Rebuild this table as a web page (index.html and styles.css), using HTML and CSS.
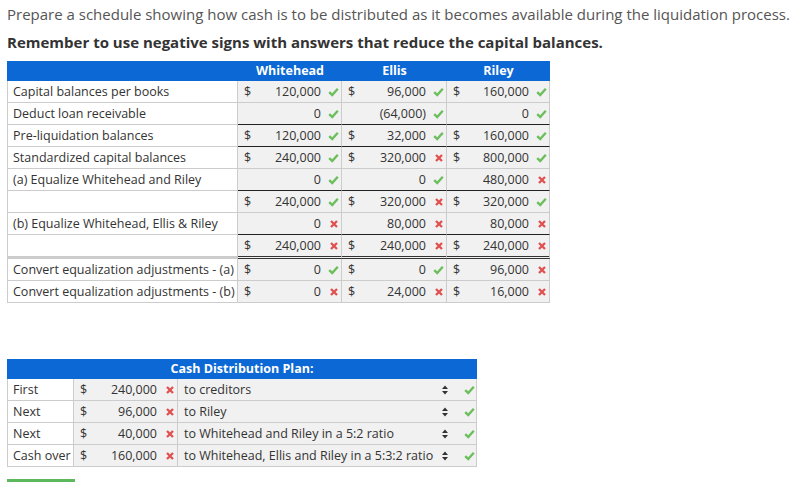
FILE: index.html
```html
<!DOCTYPE html>
<html>
<head>
<meta charset="utf-8">
<link rel="stylesheet" href="styles.css">
</head>
<body>
<p class="intro">Prepare a schedule showing how cash is to be distributed as it becomes available during the liquidation process.</p>
<p class="note">Remember to use negative signs with answers that reduce the capital balances.</p>

<table class="sched">
  <colgroup><col class="c-label"><col class="c-wh"><col class="c-el"><col class="c-ri"></colgroup>
  <thead>
    <tr><th></th><th>Whitehead</th><th>Ellis</th><th>Riley</th></tr>
  </thead>
  <tbody>
    <tr>
      <td class="lbl">Capital balances per books</td>
      <td class="d"><div class="v"><span class="cur">$</span><span class="amt">120,000</span><span class="ic ok"></span></div></td>
      <td class="d"><div class="v"><span class="cur">$</span><span class="amt">96,000</span><span class="ic ok"></span></div></td>
      <td class="d"><div class="v"><span class="cur">$</span><span class="amt">160,000</span><span class="ic ok"></span></div></td>
    </tr>
    <tr class="under">
      <td class="lbl">Deduct loan receivable</td>
      <td class="d"><div class="v"><span class="cur"></span><span class="amt">0</span><span class="ic ok"></span></div></td>
      <td class="d"><div class="v"><span class="cur"></span><span class="amt">(64,000)</span><span class="ic ok"></span></div></td>
      <td class="d"><div class="v"><span class="cur"></span><span class="amt">0</span><span class="ic ok"></span></div></td>
    </tr>
    <tr class="under">
      <td class="lbl">Pre-liquidation balances</td>
      <td class="d"><div class="v"><span class="cur">$</span><span class="amt">120,000</span><span class="ic ok"></span></div></td>
      <td class="d"><div class="v"><span class="cur">$</span><span class="amt">32,000</span><span class="ic ok"></span></div></td>
      <td class="d"><div class="v"><span class="cur">$</span><span class="amt">160,000</span><span class="ic ok"></span></div></td>
    </tr>
    <tr>
      <td class="lbl">Standardized capital balances</td>
      <td class="d"><div class="v"><span class="cur">$</span><span class="amt">240,000</span><span class="ic ok"></span></div></td>
      <td class="d"><div class="v"><span class="cur">$</span><span class="amt">320,000</span><span class="ic bad"></span></div></td>
      <td class="d"><div class="v"><span class="cur">$</span><span class="amt">800,000</span><span class="ic ok"></span></div></td>
    </tr>
    <tr class="under">
      <td class="lbl">(a) Equalize Whitehead and Riley</td>
      <td class="d"><div class="v"><span class="cur"></span><span class="amt">0</span><span class="ic ok"></span></div></td>
      <td class="d"><div class="v"><span class="cur"></span><span class="amt">0</span><span class="ic ok"></span></div></td>
      <td class="d"><div class="v"><span class="cur"></span><span class="amt">480,000</span><span class="ic bad"></span></div></td>
    </tr>
    <tr>
      <td class="lbl"></td>
      <td class="d"><div class="v"><span class="cur">$</span><span class="amt">240,000</span><span class="ic ok"></span></div></td>
      <td class="d"><div class="v"><span class="cur">$</span><span class="amt">320,000</span><span class="ic bad"></span></div></td>
      <td class="d"><div class="v"><span class="cur">$</span><span class="amt">320,000</span><span class="ic ok"></span></div></td>
    </tr>
    <tr class="under">
      <td class="lbl">(b) Equalize Whitehead, Ellis &amp; Riley</td>
      <td class="d"><div class="v"><span class="cur"></span><span class="amt">0</span><span class="ic bad"></span></div></td>
      <td class="d"><div class="v"><span class="cur"></span><span class="amt">80,000</span><span class="ic bad"></span></div></td>
      <td class="d"><div class="v"><span class="cur"></span><span class="amt">80,000</span><span class="ic bad"></span></div></td>
    </tr>
    <tr class="dbl">
      <td class="lbl"></td>
      <td class="d"><div class="v"><span class="cur">$</span><span class="amt">240,000</span><span class="ic bad"></span></div></td>
      <td class="d"><div class="v"><span class="cur">$</span><span class="amt">240,000</span><span class="ic bad"></span></div></td>
      <td class="d"><div class="v"><span class="cur">$</span><span class="amt">240,000</span><span class="ic bad"></span></div></td>
    </tr>
    <tr>
      <td class="lbl">Convert equalization adjustments - (a)</td>
      <td class="d"><div class="v"><span class="cur">$</span><span class="amt">0</span><span class="ic ok"></span></div></td>
      <td class="d"><div class="v"><span class="cur">$</span><span class="amt">0</span><span class="ic ok"></span></div></td>
      <td class="d"><div class="v"><span class="cur">$</span><span class="amt">96,000</span><span class="ic bad"></span></div></td>
    </tr>
    <tr>
      <td class="lbl">Convert equalization adjustments - (b)</td>
      <td class="d"><div class="v"><span class="cur">$</span><span class="amt">0</span><span class="ic bad"></span></div></td>
      <td class="d"><div class="v"><span class="cur">$</span><span class="amt">24,000</span><span class="ic bad"></span></div></td>
      <td class="d"><div class="v"><span class="cur">$</span><span class="amt">16,000</span><span class="ic bad"></span></div></td>
    </tr>
  </tbody>
</table>

<table class="plan">
  <colgroup><col class="p-label"><col class="p-amt"><col class="p-desc"></colgroup>
  <thead>
    <tr><th colspan="3">Cash Distribution Plan:</th></tr>
  </thead>
  <tbody>
    <tr>
      <td class="lbl">First</td>
      <td class="d"><div class="v"><span class="cur">$</span><span class="amt">240,000</span><span class="ic bad"></span></div></td>
      <td class="d"><div class="sel"><span class="txt">to creditors</span><span class="arrows"></span><span class="ic ok"></span></div></td>
    </tr>
    <tr>
      <td class="lbl">Next</td>
      <td class="d"><div class="v"><span class="cur">$</span><span class="amt">96,000</span><span class="ic bad"></span></div></td>
      <td class="d"><div class="sel"><span class="txt">to Riley</span><span class="arrows"></span><span class="ic ok"></span></div></td>
    </tr>
    <tr>
      <td class="lbl">Next</td>
      <td class="d"><div class="v"><span class="cur">$</span><span class="amt">40,000</span><span class="ic bad"></span></div></td>
      <td class="d"><div class="sel"><span class="txt">to Whitehead and Riley in a 5:2 ratio</span><span class="arrows"></span><span class="ic ok"></span></div></td>
    </tr>
    <tr>
      <td class="lbl">Cash over</td>
      <td class="d"><div class="v"><span class="cur">$</span><span class="amt">160,000</span><span class="ic bad"></span></div></td>
      <td class="d"><div class="sel"><span class="txt">to Whitehead, Ellis and Riley in a 5:3:2 ratio</span><span class="arrows"></span><span class="ic ok"></span></div></td>
    </tr>
  </tbody>
</table>

<div class="bar"></div>
</body>
</html>
```

FILE: styles.css
```css
html, body {
  margin: 0;
  padding: 0;
  background: #fff;
}
body {
  padding: 4px 7px 0 7px;
  font-family: "Open Sans", "Noto Sans", sans-serif;
  color: #333;
}
.intro {
  margin: 0;
  font-size: 15px;
  line-height: 20px;
  color: #555;
}
.note {
  margin: 8px 0 0 0;
  font-size: 15px;
  line-height: 20px;
  font-weight: bold;
  color: #333;
}

table {
  border-collapse: separate;
  border-spacing: 0;
  table-layout: fixed;
  font-size: 12.5px;
  color: #333;
}
th {
  background: #0b68d4;
  color: #fff;
  font-weight: bold;
  height: 20px;
  padding: 0;
  text-align: center;
  line-height: 20px;
}
td {
  height: 21px;
  padding: 0;
  border-right: 1px solid #ccc;
  border-bottom: 1px solid #ccc;
  line-height: 21px;
  white-space: nowrap;
  overflow: hidden;
}
td:first-child {
  border-left: 1px solid #ccc;
}
td.lbl {
  background: #fff;
  padding-left: 5px;
}
td.d {
  background: #f1f1f1;
}

.sched {
  margin-top: 9px;
  width: 543px;
}
.c-label { width: 231px; }
.c-wh { width: 104px; }
.c-el { width: 105px; }
.c-ri { width: 103px; }

.sched tr.under td.d {
  border-bottom-color: #222;
}
.sched tr.dbl td.d {
  border-bottom: 3px double #333;
}
.sched tr.dbl td.lbl {
  border-bottom-width: 3px;
  border-bottom-style: solid;
  border-bottom-color: #ccc;
}

.v {
  display: flex;
  align-items: center;
  height: 21px;
}
.cur {
  width: 12px;
  padding-left: 6px;
}
.amt {
  flex: 1;
  text-align: right;
}
.ic {
  width: 11px;
  height: 10px;
  margin: 0 2px 0 7px;
  background-repeat: no-repeat;
  background-position: center;
}
.ic.ok {
  background-image: url("data:image/svg+xml;utf8,<svg xmlns='http://www.w3.org/2000/svg' width='11' height='10' viewBox='0 0 11 10'><path d='M1.2 5.2 L4.2 8 L9.8 1.8' stroke='%236cbf5c' stroke-width='2.4' fill='none' stroke-linejoin='miter'/></svg>");
}
.ic.bad {
  background-image: url("data:image/svg+xml;utf8,<svg xmlns='http://www.w3.org/2000/svg' width='8' height='8' viewBox='0 0 8 8'><path d='M1 1 L7 7 M7 1 L1 7' stroke='%23e0504f' stroke-width='2.3' fill='none'/></svg>");
}

.plan {
  margin-top: 56px;
  width: 470px;
}
.p-label { width: 67px; }
.p-amt { width: 104px; }
.p-desc { width: 299px; }

.sel {
  display: flex;
  align-items: center;
  height: 21px;
  padding-left: 6px;
}
.sel .txt {
  flex: 1;
}
.arrows {
  width: 6px;
  height: 10px;
  margin-right: 9px;
  background-image: url("data:image/svg+xml;utf8,<svg xmlns='http://www.w3.org/2000/svg' width='6' height='10' viewBox='0 0 6 10'><path d='M0 4 L3 0.5 L6 4 Z M0 6 L3 9.5 L6 6 Z' fill='%23333'/></svg>");
  background-repeat: no-repeat;
}
.sel .ic {
  margin: 0 1px 0 7px;
}

.bar {
  margin-top: 12px;
  width: 68px;
  height: 4px;
  background: #5cb85c;
}
```
